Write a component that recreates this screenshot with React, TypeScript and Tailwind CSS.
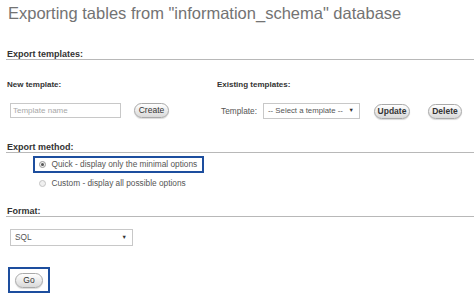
import React from 'react';

//================== Small pieces ==================
const SectionHeading: React.FC<{ children: React.ReactNode; className?: string }> = ({ children, className }) => (
  <div
    className={`ml-[6px] pl-[1px] border-b border-[#b8b8b8] text-[9px] leading-[9px] font-bold text-[#333] ${className ?? ''}`}
  >
    {children}
  </div>
);

const PillButton: React.FC<{ label: string; className?: string; bold?: boolean }> = ({ label, className, bold }) => (
  <button
    type="button"
    className={`h-[15px] rounded-full border border-[#a9a9a9] bg-linear-to-b from-white to-[#d9d9d9] text-[8.5px] leading-none text-[#333] shadow-[0_1px_1px_rgba(0,0,0,0.15)] ${
      bold ? 'font-bold' : ''
    } ${className ?? ''}`}
  >
    {label}
  </button>
);

const Arrow = () => <span className="text-[5.5px] leading-none text-[#333]">▼</span>;

const Radio: React.FC<{ checked?: boolean }> = ({ checked }) =>
  checked ? (
    <span className="flex h-[7px] w-[7px] shrink-0 items-center justify-center rounded-full border border-[#9a9a9a] bg-[#eee]">
      <span className="h-[3px] w-[3px] rounded-full bg-[#555]" />
    </span>
  ) : (
    <span className="h-[7px] w-[7px] shrink-0 rounded-full border border-[#c4c4c4] bg-[#f0f0f0]" />
  );

export default function App() {
  return (
    <div className="h-[294px] w-[474px] overflow-hidden bg-white font-['Liberation_Sans',Arial,sans-serif] text-[#555]">
      {/* Title */}
      <h1 className="pl-[8px] pt-[5px] text-[16.5px] leading-[16.5px] font-normal text-[#737373]">
        Exporting tables from "information_schema" database
      </h1>

      {/* Export templates */}
      <SectionHeading className="mt-[28.5px]">Export templates:</SectionHeading>

      <div className="mt-[20px] flex">
        <div className="w-[217px] pl-[7px]">
          <div className="text-[8px] leading-[10px] font-bold text-[#333]">New template:</div>
          <div className="mt-[13px] flex items-center">
            <input
              type="text"
              placeholder="Template name"
              className="ml-[3px] h-[15px] w-[111px] border border-[#c8c8c8] bg-white px-[2px] text-[8px] text-[#555] outline-none placeholder:text-[#a8a8a8]"
            />
            <PillButton label="Create" className="ml-[13px] w-[35px]" />
          </div>
        </div>

        <div>
          <div className="text-[8px] leading-[10px] font-bold text-[#333]">Existing templates:</div>
          <div className="mt-[13px] flex items-center">
            <span className="ml-[4px] w-[42px] text-[8.3px] text-[#555]">Template:</span>
            <div className="flex h-[16px] w-[97px] items-center justify-between border border-[#c8c8c8] bg-white pl-[4px] pr-[5px] text-[7.8px] text-[#555]">
              <span>-- Select a template --</span>
              <Arrow />
            </div>
            <PillButton label="Update" bold className="ml-[14px] w-[36px]" />
            <PillButton label="Delete" bold className="ml-[18px] w-[34px]" />
          </div>
        </div>
      </div>

      {/* Export method */}
      <SectionHeading className="mt-[24px]">Export method:</SectionHeading>

      <div className="mt-[3px] ml-[33px] flex h-[17px] w-[171px] items-center border-2 border-[#1d4e9e] pl-[4px]">
        <Radio checked />
        <span className="ml-[5.5px] text-[8.3px] leading-none text-[#555]">Quick - display only the minimal options</span>
      </div>
      <div className="mt-[4px] flex h-[12px] items-center pl-[39px]">
        <Radio />
        <span className="ml-[5.5px] text-[8.3px] leading-none text-[#555]">Custom - display all possible options</span>
      </div>

      {/* Format */}
      <SectionHeading className="mt-[18px]">Format:</SectionHeading>

      <div className="mt-[12px] ml-[10px] flex h-[17px] w-[123px] items-center justify-between border border-[#c8c8c8] bg-white pl-[4px] pr-[5px] text-[8.3px] text-[#555]">
        <span>SQL</span>
        <Arrow />
      </div>

      <div className="mt-[21px] ml-[8px] flex h-[26px] w-[42px] items-center justify-center border-2 border-[#1d4e9e]">
        <PillButton label="Go" className="w-[28px]" />
      </div>
    </div>
  );
}
